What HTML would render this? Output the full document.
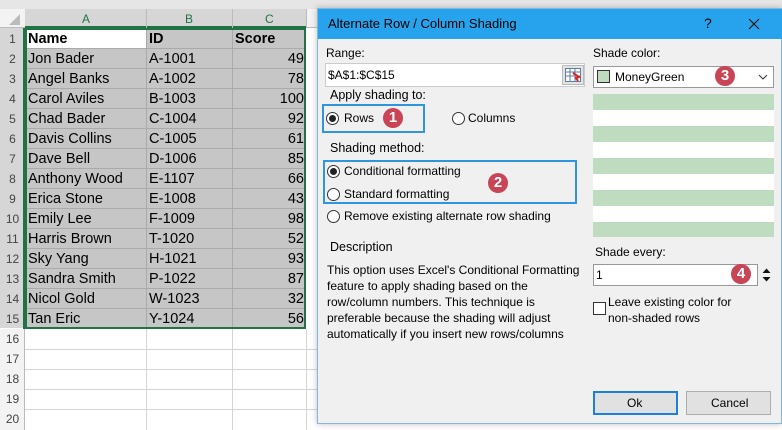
<!DOCTYPE html><html><head><style>
*{margin:0;padding:0;box-sizing:border-box}
body{width:782px;height:430px;overflow:hidden;background:#fff;font-family:"Liberation Sans",sans-serif;position:relative}
.a{position:absolute}
.t{position:absolute;font-size:12px;color:#000;white-space:nowrap;line-height:14px}
.cell{position:absolute;font-size:14.5px;line-height:20px;white-space:nowrap}
.rh{position:absolute;left:0;width:25px;text-align:center;font-size:12px;color:#444;line-height:20px}
.radio{position:absolute;width:13px;height:13px;border:1px solid #333;border-radius:50%;background:#fff}
.radio.on:after{content:"";position:absolute;left:2px;top:2px;width:7px;height:7px;border-radius:50%;background:#222}
.badge{position:absolute;width:20px;height:20px;border-radius:50%;background:#c94455;color:#fff;font-weight:bold;font-size:15px;text-align:center;line-height:20px}
</style></head><body>
<div class="a" style="left:0;top:0;width:782px;height:9px;background:#e6e6e6"></div>
<div class="a" style="left:0;top:9px;width:782px;height:19px;background:#f3f3f3;border-bottom:1px solid #bbb"></div>
<div class="a" style="left:25px;top:9px;width:281px;height:19px;background:#d6d6d6;border-bottom:2px solid #217346"></div>
<div class="a" style="left:0;top:28px;width:25px;height:300px;background:#d6d6d6"></div>
<div class="a" style="left:0;top:329px;width:25px;height:101px;background:#f3f3f3;border-right:1px solid #bbb"></div>
<div class="a" style="left:23px;top:28px;width:2px;height:301px;background:#217346"></div>
<div class="t" style="left:82px;top:12px;color:#217346">A</div>
<div class="t" style="left:185px;top:12px;color:#217346">B</div>
<div class="t" style="left:265px;top:12px;color:#217346">C</div>
<svg class="a" style="left:0;top:0" width="782" height="430">
<g stroke="#d4d4d4" stroke-width="1">
<line x1="25" y1="349.5" x2="318" y2="349.5"/><line x1="25" y1="369.5" x2="318" y2="369.5"/><line x1="25" y1="389.5" x2="318" y2="389.5"/><line x1="25" y1="409.5" x2="318" y2="409.5"/>
<line x1="146.5" y1="329" x2="146.5" y2="430"/><line x1="232.5" y1="329" x2="232.5" y2="430"/><line x1="306.5" y1="329" x2="306.5" y2="430"/>
</g>
<g stroke="#bbb"><line x1="146.5" y1="9" x2="146.5" y2="28"/><line x1="232.5" y1="9" x2="232.5" y2="28"/><line x1="306.5" y1="9" x2="306.5" y2="28"/></g>
<polygon points="20,25 20,14 9,25" fill="#bbb"/>
</svg>
<div class="a" style="left:25px;top:29px;width:281px;height:300px;background:#c6c6c6"></div>
<div class="a" style="left:26px;top:29px;width:120px;height:19px;background:#fff"></div>
<svg class="a" style="left:0;top:0" width="320" height="430"><g stroke="#aaa">
<line x1="146.5" y1="29" x2="146.5" y2="329"/><line x1="232.5" y1="29" x2="232.5" y2="329"/>
<line x1="25" y1="48.5" x2="306" y2="48.5"/><line x1="25" y1="68.5" x2="306" y2="68.5"/><line x1="25" y1="88.5" x2="306" y2="88.5"/><line x1="25" y1="108.5" x2="306" y2="108.5"/><line x1="25" y1="128.5" x2="306" y2="128.5"/><line x1="25" y1="148.5" x2="306" y2="148.5"/><line x1="25" y1="168.5" x2="306" y2="168.5"/><line x1="25" y1="188.5" x2="306" y2="188.5"/><line x1="25" y1="208.5" x2="306" y2="208.5"/><line x1="25" y1="228.5" x2="306" y2="228.5"/><line x1="25" y1="248.5" x2="306" y2="248.5"/><line x1="25" y1="268.5" x2="306" y2="268.5"/><line x1="25" y1="288.5" x2="306" y2="288.5"/><line x1="25" y1="308.5" x2="306" y2="308.5"/>
</g><rect x="26" y="29" width="279" height="299" fill="none" stroke="#217346" stroke-width="2"/></svg>
<div id="cells"></div>
<script>
var d=[["Name","ID","Score"],["Jon Bader","A-1001",49],["Angel Banks","A-1002",78],["Carol Aviles","B-1003",100],["Chad Bader","C-1004",92],["Davis Collins","C-1005",61],["Dave Bell","D-1006",85],["Anthony Wood","E-1107",66],["Erica Stone","E-1008",43],["Emily Lee","F-1009",98],["Harris Brown","T-1020",52],["Sky Yang","H-1021",93],["Sandra Smith","P-1022",87],["Nicol Gold","W-1023",32],["Tan Eric","Y-1024",56]];
var h="";for(var i=0;i<20;i++){var y=29+i*20;h+='<div class="rh" style="top:'+y+'px">'+(i+1)+'</div>';if(i<15){var b=i==0?'font-weight:bold;':'';h+='<div class="cell" style="left:28px;top:'+y+'px;'+b+'">'+d[i][0]+'</div><div class="cell" style="left:149px;top:'+y+'px;'+b+'">'+d[i][1]+'</div>';h+=i==0?'<div class="cell" style="left:235px;top:'+y+'px;'+b+'">Score</div>':'<div class="cell" style="right:478px;top:'+y+'px">'+d[i][2]+'</div>';}}
document.getElementById("cells").innerHTML=h;
</script>
<!-- dialog -->
<div class="a" style="left:317px;top:8px;width:465px;height:416px;background:#f0f0f0;border:1px solid #7fb9e0;box-shadow:0 0 6px rgba(0,0,0,.25)"></div>
<div class="a" style="left:318px;top:9px;width:464px;height:30px;background:#27a3ed"></div>
<div class="t" style="left:328px;top:17px;font-size:13px">Alternate Row / Column Shading</div>
<div class="t" style="left:704px;top:16px;font-size:14px">?</div>
<svg class="a" style="left:748px;top:18px" width="12" height="12"><path d="M1 1L11 11M11 1L1 11" stroke="#111" stroke-width="1.2"/></svg>
<div class="t" style="left:326px;top:46px">Range:</div>
<div class="a" style="left:325px;top:63px;width:260px;height:24px;background:#fff;border:1px solid #ccc"></div>
<div class="t" style="left:328px;top:68px">$A$1:$C$15</div>
<div class="a" style="left:562px;top:65px;width:22px;height:20px;background:#e4e4e4;border:1px solid #bbb"></div>
<svg class="a" style="left:565px;top:68px" width="16" height="14"><rect x="0.5" y="0.5" width="15" height="13" fill="#fff" stroke="#5a7fa8"/><path d="M0 4H16M0 8H16M5 0V14M10 0V14" stroke="#5a7fa8"/><path d="M8 5L14 9L11 10L13 13" stroke="#d22" stroke-width="2" fill="none"/></svg>
<div class="t" style="left:330px;top:88px;font-size:12.5px">Apply shading to:</div>
<div class="a" style="left:322px;top:104px;width:103px;height:29px;border:2px solid #2f95e0"></div>
<div class="radio on" style="left:326px;top:112px"></div><div class="t" style="left:344px;top:111px">Rows</div>
<div class="badge" style="left:383px;top:108px">1</div>
<div class="radio" style="left:452px;top:112px"></div><div class="t" style="left:468px;top:111px">Columns</div>
<div class="t" style="left:330px;top:141px;font-size:12.5px">Shading method:</div>
<div class="a" style="left:323px;top:160px;width:254px;height:44px;border:2px solid #2f95e0"></div>
<div class="radio on" style="left:327px;top:165px"></div><div class="t" style="left:344px;top:164px">Conditional formatting</div>
<div class="radio" style="left:327px;top:188px"></div><div class="t" style="left:344px;top:187px">Standard formatting</div>
<div class="badge" style="left:488px;top:173px">2</div>
<div class="radio" style="left:327px;top:210px"></div><div class="t" style="left:344px;top:209px">Remove existing alternate row shading</div>
<div class="t" style="left:330px;top:240px;font-size:12.5px">Description</div>
<div class="t" style="left:327px;top:262px;line-height:16px;font-size:12px">This option uses Excel's Conditional Formatting<br>feature to apply shading based on the<br>row/column numbers. This technique is<br>preferable because the shading will adjust<br>automatically if you insert new rows/columns</div>
<div class="t" style="left:593px;top:46px">Shade color:</div>
<div class="a" style="left:593px;top:66px;width:181px;height:22px;background:#fff;border:1px solid #999"></div>
<div class="a" style="left:597px;top:70px;width:13px;height:13px;background:#c0dcc0;border:1px solid #333"></div>
<div class="t" style="left:615px;top:70px">MoneyGreen</div>
<div class="badge" style="left:715px;top:66px">3</div>
<svg class="a" style="left:758px;top:74px" width="10" height="6"><path d="M1 1L5 5L9 1" stroke="#333" fill="none"/></svg>
<div class="a" style="left:593px;top:94px;width:181px;height:143px;background:repeating-linear-gradient(#c0dcc0 0 16px,#fff 16px 32px)"></div>
<div class="t" style="left:595px;top:245px">Shade every:</div>
<div class="a" style="left:593px;top:264px;width:165px;height:22px;background:#fff;border:1px solid #999"></div>
<div class="t" style="left:596px;top:268px">1</div>
<div class="badge" style="left:731px;top:264px">4</div>
<svg class="a" style="left:762px;top:268px" width="9" height="14"><path d="M0.5 5L4.5 0.5L8.5 5ZM0.5 9L4.5 13.5L8.5 9Z" fill="#111"/></svg>
<div class="a" style="left:593px;top:302px;width:13px;height:13px;background:#fff;border:1px solid #333"></div>
<div class="t" style="left:608px;top:294px;line-height:16px">Leave existing color for<br>non-shaded rows</div>
<div class="a" style="left:593px;top:391px;width:85px;height:24px;background:#e1e1e1;border:2px solid #1e7fd8"></div>
<div class="t" style="left:627px;top:396px">Ok</div>
<div class="a" style="left:686px;top:391px;width:85px;height:24px;background:#e1e1e1;border:1px solid #adadad"></div>
<div class="t" style="left:711px;top:396px">Cancel</div>
</body></html>
